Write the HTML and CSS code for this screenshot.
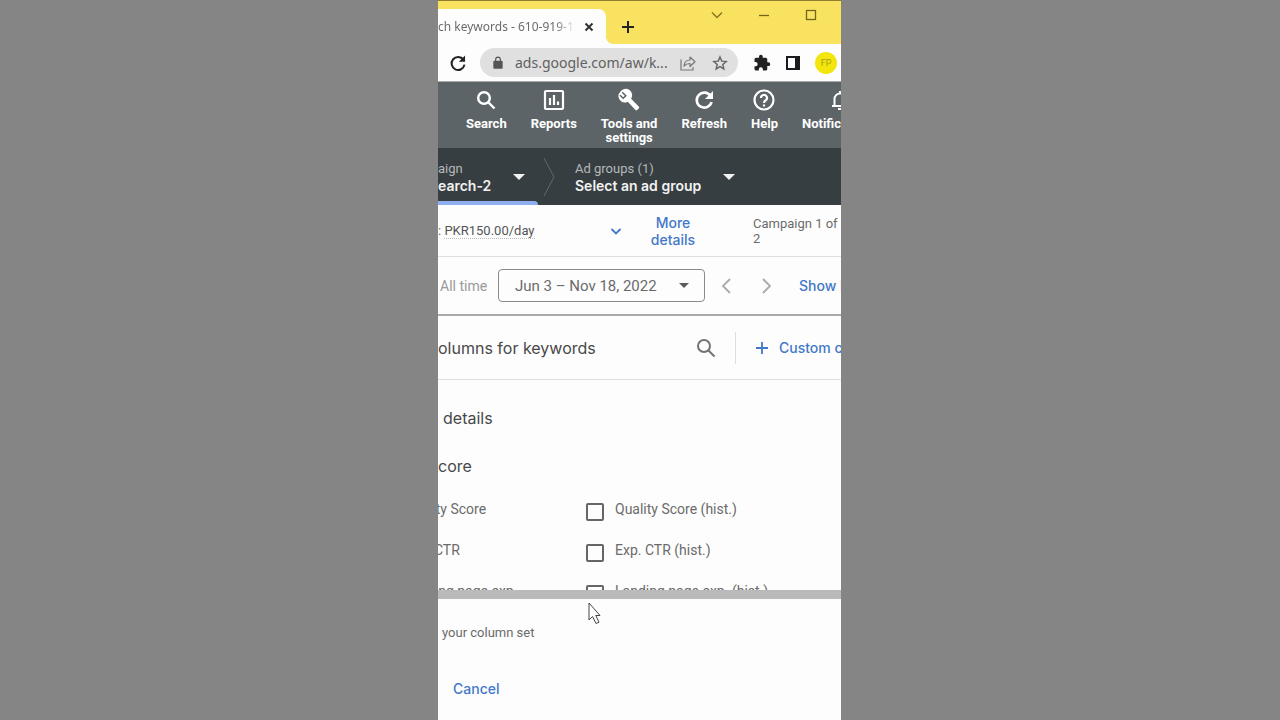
FILE: index.html
```html
<!DOCTYPE html>
<html lang="en">

<head>
    <meta charset="UTF-8">
    <meta name="viewport" content="width=device-width, initial-scale=1.0">
    <title>Keywords - Modify columns</title>
    <link rel="stylesheet" href="styles.css">
</head>

<body>
    <div class="stage">
        <main class="screen">
            <!-- Browser window -->
            <div class="tab-strip">
                <div class="tab">
                    <span class="tab-title">ch keywords - 610-919-15</span>
                    <button class="icon-btn" aria-label="Close tab">
                        <svg width="10" height="10" viewBox="0 0 10 10"><path d="M1.5 1.5l7 7M8.5 1.5l-7 7" stroke="#333" stroke-width="2" /></svg>
                    </button>
                </div>
                <button class="icon-btn new-tab" aria-label="New tab">
                    <svg width="14" height="14" viewBox="0 0 14 14"><path d="M7 1v12M1 7h12" stroke="#222" stroke-width="2" /></svg>
                </button>
                <div class="window-controls">
                    <button class="icon-btn" aria-label="Search tabs">
                        <svg width="12" height="12" viewBox="0 0 12 12"><path d="M1 3.5l5 5 5-5" fill="none" stroke="#857420" stroke-width="1.4" /></svg>
                    </button>
                    <button class="icon-btn" aria-label="Minimize">
                        <svg width="12" height="12" viewBox="0 0 12 12"><path d="M1 6.5h10" stroke="#75651a" stroke-width="1.3" /></svg>
                    </button>
                    <button class="icon-btn" aria-label="Maximize">
                        <svg width="12" height="12" viewBox="0 0 12 12"><rect x="1.5" y="1.5" width="9" height="9" fill="none" stroke="#75651a" stroke-width="1.3" /></svg>
                    </button>
                </div>
            </div>

            <div class="toolbar">
                <button class="icon-btn" aria-label="Reload">
                    <svg width="20" height="20" viewBox="0 0 24 24"><path d="M18.5 8A7.800 7.800 0 1 0 19.800 14" fill="none" stroke="#222" stroke-width="2.400" /><path d="M20.500 3v7.500H13z" fill="#222" /></svg>
                </button>
                <div class="address">
                    <svg width="14" height="14" viewBox="0 0 24 24"><path d="M18 8h-1V6A5 5 0 0 0 7 6v2H6a2 2 0 0 0-2 2v10c0 1.100.9 2 2 2h12a2 2 0 0 0 2-2V10a2 2 0 0 0-2-2zM9 6a3 3 0 0 1 6 0v2H9z" fill="#555" /></svg>
                    <input class="address-input" type="text" value="ads.google.com/aw/k..." aria-label="Address">
                    <button class="icon-btn" aria-label="Share">
                        <svg width="16" height="16" viewBox="0 0 16 16" fill="none" stroke="#777" stroke-width="1.200"><path d="M1 4.500V15h12v-3" /><path d="M4 11c.3-4 2.500-6 6-6V2l5 4.800-5 4.700V8.500C7.500 8.500 5.500 9.300 4 11z" stroke-linejoin="round" /></svg>
                    </button>
                    <button class="icon-btn" aria-label="Bookmark">
                        <svg width="16" height="16" viewBox="0 0 24 24"><path d="M12 3l2.600 6.200 6.700.6-5.100 4.400 1.500 6.600L12 17.300l-5.700 3.500 1.500-6.600-5.100-4.400 6.700-.6z" fill="none" stroke="#666" stroke-width="2.200" /></svg>
                    </button>
                </div>
                <button class="icon-btn" aria-label="Extensions">
                    <svg width="18" height="18" viewBox="0 0 24 24"><path d="M20.500 11H19V7a2 2 0 0 0-2-2h-4V3.500a2.500 2.500 0 0 0-5 0V5H4a2 2 0 0 0-2 2v3.800h1.500a2.700 2.700 0 0 1 0 5.400H2V20c0 1.100.9 2 2 2h3.800v-1.500a2.700 2.700 0 0 1 5.400 0V22H17a2 2 0 0 0 2-2v-4h1.500a2.500 2.500 0 0 0 0-5z" fill="#222" /></svg>
                </button>
                <button class="icon-btn" aria-label="Side panel">
                    <svg width="14" height="14" viewBox="0 0 14 14"><path d="M1 1h12v12H1z" fill="none" stroke="#1a1a1f" stroke-width="2" /><path d="M9 1h4v12H9z" fill="#1a1a1f" /></svg>
                </button>
                <button class="icon-btn avatar" aria-label="Profile">FP</button>
            </div>

            <!-- Google Ads header -->
            <nav class="ads-nav">
                <a class="nav-item" href="#">
                    <svg width="24" height="24" viewBox="0 0 24 24" fill="none" stroke="#fff" stroke-width="2.400"><circle cx="10" cy="10" r="5.800" /><path d="M14 14l6.500 6.500" /></svg>
                    Search
                </a>
                <a class="nav-item" href="#">
                    <svg width="24" height="24" viewBox="0 0 24 24" fill="none" stroke="#fff" stroke-width="2.200"><rect x="3" y="3" width="18" height="18" rx="1" /><path d="M8 10v7M12 7v10M16 13.500V17" /></svg>
                    Reports
                </a>
                <a class="nav-item" href="#">
                    <svg width="24" height="24" viewBox="0 0 24 24"><path d="M21.700 18.500l-7.600-7.800a6.300 6.300 0 0 0-10.800-6.900 6.300 6.300 0 0 0 7.500 9.900l7.400 8c.7.700 1.500.7 2.200 0l1.300-1.200c.7-.6.7-1.300 0-2z" fill="#fff" /><path d="M5.200 4.300l3.600 3.400-2.600 2.600L3 7.200" fill="none" stroke="#5d6467" stroke-width="1.500" /></svg>
                    Tools and<br>settings
                </a>
                <a class="nav-item" href="#">
                    <svg width="24" height="24" viewBox="0 0 24 24"><path d="M18.500 8A7.500 7.500 0 1 0 19.500 14" fill="none" stroke="#fff" stroke-width="2.600" /><path d="M21 3v8h-8z" fill="#fff" /></svg>
                    Refresh
                </a>
                <a class="nav-item" href="#">
                    <svg width="24" height="24" viewBox="0 0 24 24" fill="none" stroke="#fff" stroke-width="2.200"><circle cx="12" cy="12" r="9.500" /><path d="M9 10a3 3 0 1 1 4.500 2.500c-1 .7-1.500 1.200-1.500 2.500M12 16.500v2" /></svg>
                    Help
                </a>
                <a class="nav-item" href="#">
                    <svg width="24" height="24" viewBox="0 0 24 24" fill="none"><path d="M4 18h16M6.500 18v-7a5.500 5.500 0 0 1 11 0v7M12 3v3M10 21h4" stroke="#fff" stroke-width="2" /><circle cx="19" cy="5" r="6" fill="#e5493a" /></svg>
                    Notifications
                </a>
            </nav>

            <div class="breadcrumb">
                <button class="crumb crumb-active">
                    <span class="crumb-text">
                        <span class="crumb-label">aign</span>
                        <span class="crumb-name">earch-2</span>
                    </span>
                    <span class="caret"></span>
                </button>
                <svg class="crumb-sep" width="12" height="40" viewBox="0 0 12 40"><path d="M1 1l10 19L1 39" fill="none" stroke="#61696c" stroke-width="1" /></svg>
                <button class="crumb">
                    <span class="crumb-text">
                        <span class="crumb-label">Ad groups (1)</span>
                        <span class="crumb-name">Select an ad group</span>
                    </span>
                    <span class="caret"></span>
                </button>
            </div>

            <div class="budget-row">
                <span class="budget">: <span class="budget-value">PKR150.00/day</span></span>
                <button class="icon-btn" aria-label="Expand">
                    <svg width="12" height="12" viewBox="0 0 12 12"><path d="M1.500 4l4.500 4.500L10.500 4" fill="none" stroke="#4278c8" stroke-width="1.800" /></svg>
                </button>
                <a class="link more-link" href="#">More details</a>
                <span class="campaign-count">Campaign 1 of 2</span>
            </div>

            <div class="date-row">
                <label class="date-label" for="range">All time</label>
                <div class="date-select">
                    <select id="range">
                        <option>Jun 3 – Nov 18, 2022</option>
                    </select>
                    <span class="caret caret-dark"></span>
                </div>
                <button class="icon-btn" aria-label="Previous period">
                    <svg width="12" height="18" viewBox="0 0 12 18"><path d="M10 2L3 9l7 7" fill="none" stroke="#aaa" stroke-width="1.800" /></svg>
                </button>
                <button class="icon-btn" aria-label="Next period">
                    <svg width="12" height="18" viewBox="0 0 12 18"><path d="M2 2l7 7-7 7" fill="none" stroke="#aaa" stroke-width="1.800" /></svg>
                </button>
                <a class="link show-link" href="#">Show last</a>
            </div>

            <!-- Column picker -->
            <div class="picker-header">
                <h1 class="picker-title">olumns for keywords</h1>
                <button class="icon-btn" aria-label="Search columns">
                    <svg width="20" height="20" viewBox="0 0 20 20" fill="none" stroke="#737373" stroke-width="2"><circle cx="8" cy="8" r="6" /><path d="M12 12l6.500 6.500" /></svg>
                </button>
                <button class="link custom-btn">
                    <svg width="14" height="14" viewBox="0 0 14 14"><path d="M7 1v12M1 7h12" stroke="#4278c8" stroke-width="1.800" /></svg>
                    Custom columns
                </button>
            </div>

            <div class="picker-body">
                <h2 class="section-title section-indent">details</h2>
                <h2 class="section-title">core</h2>
                <div class="columns">
                    <span class="column-name">Quality Score</span>
                    <label class="column-option"><input type="checkbox"> Quality Score (hist.)</label>
                    <span class="column-name">Exp. CTR</span>
                    <label class="column-option"><input type="checkbox"> Exp. CTR (hist.)</label>
                    <span class="column-name">Landing page exp.</span>
                    <label class="column-option"><input type="checkbox"> Landing page exp. (hist.)</label>
                </div>
            </div>

            <footer class="picker-footer">
                <p class="save-text">your column set</p>
                <button class="link cancel-btn">Cancel</button>
                <svg class="cursor" width="14" height="24" viewBox="0 0 14 24"><path d="M1 1v17l3.500-3.500L8 21.500l3-1.300-3.200-6.700H12z" fill="#fff" stroke="#444" stroke-width="1" /></svg>
            </footer>
        </main>
    </div>
</body>

</html>
```

FILE: styles.css
```css
:root {
    --blue: #4278c8;
    --text: #6b6b6b;
    --heading: #484848;
    --line: #dedede;
    --surface: #fdfdfd;
    --yellow: #f8e260;
    --brand-font: Inter, "Open Sans", sans-serif;
    --ui-font: Roboto, "Liberation Sans", sans-serif;
    --chrome-font: "Noto Sans", "Open Sans", sans-serif;
}

* {
    margin: 0;
    padding: 0;
    box-sizing: border-box;
}

body {
    font-family: var(--ui-font);
    font-size: 14px;
    color: var(--text);
    background: #858585;
}

button {
    font: inherit;
    color: inherit;
    background: none;
    border: none;
    cursor: pointer;
}

a {
    text-decoration: none;
}

svg {
    display: block;
    flex-shrink: 0;
}

.stage {
    display: grid;
    grid-template-columns: 438fr 403fr 439fr;
    height: 100vh;
}

.screen {
    grid-column: 2;
    min-width: 0;
    display: flex;
    flex-direction: column;
    overflow: hidden;
    background: var(--surface);
    white-space: nowrap;
}

.icon-btn {
    display: flex;
    flex-shrink: 0;
    align-items: center;
    justify-content: center;
}

.link {
    color: var(--blue);
    font-family: var(--brand-font);
    font-size: 14px;
    font-weight: 500;
}

.caret {
    flex-shrink: 0;
    border: 6px solid transparent;
    border-top-color: #f2f2f2;
    border-bottom: 0;
}

.caret-dark {
    border-width: 5px;
    border-bottom: 0;
    border-top-color: #5a5a5a;
}

/* Browser window */
.tab-strip {
    display: flex;
    height: 44px;
    flex-shrink: 0;
    background: var(--yellow);
    border-top: 1px solid #8d7d2c;
}

.tab {
    position: relative;
    display: flex;
    align-items: center;
    gap: 8px;
    width: 168px;
    margin-top: 8px;
    padding-right: 12px;
    background: var(--surface);
    border-top-right-radius: 8px;
}

/* curved foot of the tab */
.tab::after {
    content: '';
    position: absolute;
    left: 100%;
    bottom: 0;
    width: 8px;
    height: 8px;
    background: radial-gradient(circle at 100% 0, var(--yellow) 8px, var(--surface) 8px);
}

.tab-title {
    flex: 1;
    overflow: hidden;
    font-family: var(--chrome-font);
    font-size: 12px;
    -webkit-mask-image: linear-gradient(90deg, #000 85%, transparent);
    mask-image: linear-gradient(90deg, #000 85%, transparent);
}

.new-tab {
    margin: 8px 0 0 15px;
}

.window-controls {
    display: flex;
    align-items: flex-start;
    gap: 35px;
    margin-left: auto;
    padding: 8px 24px 0 0;
}

.toolbar {
    display: flex;
    align-items: center;
    flex-shrink: 0;
    gap: 15px;
    height: 38px;
    padding: 0 4px 0 10px;
    border-bottom: 1px solid #aaa;
}

.address {
    flex: 1;
    display: flex;
    align-items: center;
    gap: 16px;
    min-width: 0;
    height: 29px;
    margin-left: -3px;
    padding: 0 10px 0 11px;
    background: #e0e0e0;
    border-radius: 15px;
}

.address-input {
    flex: 1;
    min-width: 0;
    margin: 0 -8px 0 -6px;
    border: none;
    outline: none;
    background: none;
    color: #606060;
    font-family: var(--chrome-font);
    font-size: 14px;
}

.avatar {
    width: 22px;
    height: 22px;
    border-radius: 50%;
    background: #f2e60c;
    color: #a89c18;
    font-size: 9px;
}

/* Google Ads header */
.ads-nav {
    display: flex;
    flex-shrink: 0;
    gap: 24px;
    height: 66px;
    padding: 6px 0 0 28px;
    background: #5d6467;
}

.nav-item {
    display: flex;
    flex-direction: column;
    align-items: center;
    flex-shrink: 0;
    color: #fff;
    font-size: 13px;
    font-weight: 700;
    line-height: 14px;
    text-align: center;
}

.nav-item svg {
    margin-bottom: 5px;
}

.breadcrumb {
    display: flex;
    align-items: center;
    flex-shrink: 0;
    height: 57px;
    background: #373e41;
}

.crumb {
    display: flex;
    align-items: center;
    gap: 22px;
    height: 100%;
    text-align: left;
}

.crumb-active {
    position: relative;
    width: 100px;
}

.crumb-active::after {
    content: '';
    position: absolute;
    left: 0;
    right: 0;
    bottom: 0;
    height: 4px;
    background: #8fb0f0;
    border-top-right-radius: 4px;
}

.crumb-text {
    display: flex;
    flex-direction: column;
}

.crumb-label {
    color: #b4b8ba;
    font-size: 13px;
    line-height: 17px;
}

.crumb-name {
    color: #f2f2f2;
    font-family: var(--brand-font);
    font-size: 14px;
    font-weight: 600;
    line-height: 17px;
}

.crumb-sep {
    margin: 0 20px 0 5px;
}

.budget-row {
    display: flex;
    align-items: center;
    flex-shrink: 0;
    height: 52px;
    border-bottom: 1px solid var(--line);
    font-size: 13px;
}

.budget {
    flex: 1;
}

.budget-value {
    border-bottom: 1px dotted #bbb;
    color: #555;
}

.more-link {
    width: 64px;
    margin: 0 48px 0 19px;
    line-height: 17px;
    text-align: center;
    white-space: normal;
}

.campaign-count {
    width: 88px;
    line-height: 15px;
    white-space: normal;
}

.date-row {
    display: flex;
    align-items: center;
    flex-shrink: 0;
    height: 59px;
    padding-left: 2px;
    border-bottom: 2px solid #aaa;
}

.date-label {
    width: 58px;
    color: #999;
}

.date-select {
    display: flex;
    align-items: center;
    flex: 1;
    min-width: 0;
    margin-right: 15px;
}

.date-select select {
    appearance: none;
    flex: 1;
    min-width: 0;
    height: 33px;
    padding: 0 16px;
    border: 1px solid #8a8a8a;
    border-radius: 4px;
    background: transparent;
    color: var(--text);
    font-family: inherit;
    font-size: 15px;
}

.date-select .caret {
    margin: 0 16px 0 -26px;
    pointer-events: none;
}

.date-row .icon-btn + .icon-btn {
    margin: 0 26px 0 29px;
}

.show-link {
    width: 42px;
}

/* Column picker */
.picker-header {
    display: flex;
    align-items: center;
    flex-shrink: 0;
    height: 64px;
    border-bottom: 1px solid var(--line);
}

.picker-title,
.section-title {
    color: var(--heading);
    font-family: var(--brand-font);
    font-size: 16px;
    font-weight: 400;
}

.picker-title {
    flex: 1;
}

.custom-btn {
    display: flex;
    align-items: center;
    gap: 10px;
    width: 106px;
    height: 32px;
    margin-left: 19px;
    padding-left: 19px;
    border-left: 1px solid var(--line);
}

.picker-body {
    flex: 0 0 210px;
    overflow: hidden;
    padding-top: 14px;
}

.section-title {
    line-height: 48px;
}

.section-indent {
    padding-left: 5px;
}

.columns {
    display: grid;
    grid-template-columns: 182px 1fr;
    grid-auto-rows: 41px;
    margin-left: -34px;
}

.column-name,
.column-option {
    padding-top: 11px;
    line-height: 16px;
}

.column-option {
    display: flex;
    gap: 11px;
}

.column-option input {
    appearance: none;
    flex-shrink: 0;
    width: 18px;
    height: 18px;
    margin-top: 2px;
    border: 2px solid #666;
    border-radius: 2px;
}

.picker-footer {
    position: relative;
    display: flex;
    flex: 1;
    flex-direction: column;
    align-items: flex-start;
    gap: 38px;
    padding-top: 25px;
    border-top: 9px solid #bababa;
}

.save-text {
    padding-left: 4px;
    font-size: 13px;
    line-height: 18px;
}

.cancel-btn {
    padding-left: 15px;
    line-height: 18px;
}

.cursor {
    position: absolute;
    left: 150px;
    top: 3px;
}
```
